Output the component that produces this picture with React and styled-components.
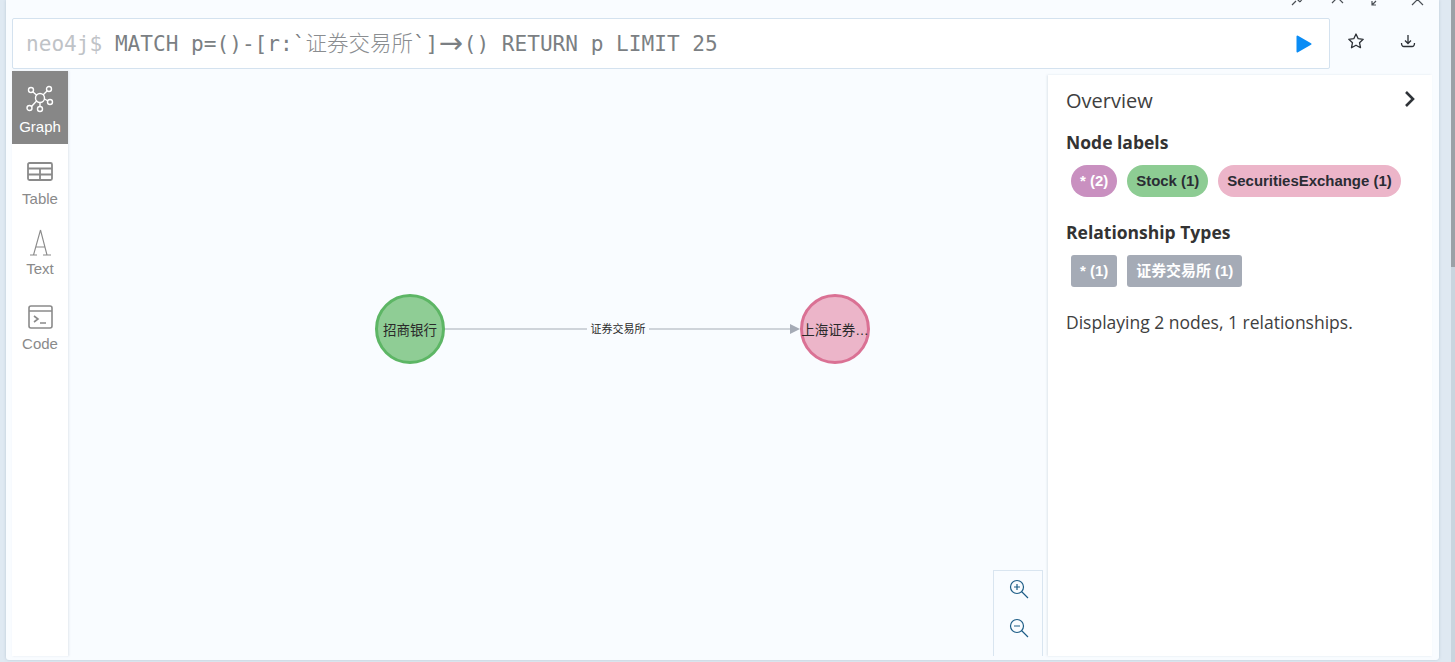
import React from "react";
import styled, { createGlobalStyle } from "styled-components";

const GlobalStyle = createGlobalStyle`
  html, body {
    margin: 0;
    padding: 0;
    height: 100%;
    overflow: hidden;
    background: #dfe9f2;
  }
  #root {
    height: 100%;
  }
`;

const sans = `"Open Sans", "Noto Sans CJK SC", sans-serif`;
const arial = `"Liberation Sans", "Noto Sans CJK SC", sans-serif`;
const mono = `"DejaVu Sans Mono", "Noto Sans CJK SC", monospace`;

/* the page, with the frame card and the browser scrollbar */
const Page = styled.div`
  height: 662px;
  display: flex;
  padding-left: 6px;
  box-sizing: border-box;
`;

const Frame = styled.div`
  width: 1433px;
  height: 660px;
  background: #f9fcff;
  border-radius: 0 0 3px 3px;
  box-shadow: 0 0 3px rgba(120, 140, 160, 0.35);
  display: flex;
  flex-direction: column;
  overflow: hidden;
`;

const Scrollbar = styled.div`
  margin-left: auto;
  width: 4px;
  height: 662px;
  background: #c9d5df;
  position: relative;
`;

const ScrollThumb = styled.div`
  position: absolute;
  top: 0;
  left: 0;
  width: 4px;
  height: 267px;
  background: #9aa1a7;
`;

const TitleIcons = styled.div`
  height: 8px;
  display: flex;
  justify-content: flex-end;
  gap: 23px;
  padding-right: 13px;
  flex: none;
`;

const TitleIcon = styled.svg`
  width: 17px;
  height: 17px;
  margin-top: -9px;
  fill: none;
  stroke: #4a4f55;
  stroke-width: 1.2;
  flex: none;
`;

const EditorRow = styled.div`
  display: flex;
  align-items: center;
  height: 51px;
  margin-top: 10px;
  padding-left: 6px;
  flex: none;
`;

const Editor = styled.div`
  width: 1318px;
  height: 51px;
  background: #fff;
  border: 1px solid #d4e2ef;
  border-radius: 2px;
  display: flex;
  align-items: center;
  padding: 0 17px 0 13px;
  box-sizing: border-box;
  flex: none;
`;

const Prompt = styled.span`
  font: 21.1px/1 ${mono};
  color: #bfc3c7;
  margin-right: 12.7px;
`;

const Query = styled.span`
  font: 21.1px/1 ${mono};
  color: #7b7f83;
  white-space: pre;
  flex: 1;
`;

const CjkRun = styled.span`
  font-size: 21.5px;
  font-weight: 300;
  color: #8a8d90;
`;

/* stands in for the two cell wide ligature of the editor font */
const ArrowGlyph = styled.span`
  display: inline-block;
  width: 25.4px;
  text-align: center;
  font-family: "DejaVu Sans", sans-serif;
  font-size: 29px;
  line-height: 0;
  overflow: visible;
  vertical-align: -2px;
`;

const EditorAction = styled.button`
  width: 52px;
  height: 40px;
  border: 0;
  padding: 0 0 5px;
  background: transparent;
  display: flex;
  align-items: center;
  justify-content: center;
  flex: none;
`;

const ActionIcon = styled.svg`
  width: 18px;
  height: 18px;
  fill: none;
  stroke: #2c3036;
  stroke-width: 1.3;
`;

const Body = styled.div`
  flex: 1;
  display: flex;
  min-height: 0;
  padding: 0 7px 0 6px;
  margin-top: 2px;
`;

/* left column with the view switcher */
const Sidebar = styled.nav`
  width: 56px;
  height: 585px;
  background: #fff;
  box-shadow: 1px 0 2px rgba(120, 140, 160, 0.18);
  flex: none;
`;

const Tab = styled.div`
  height: ${(p) => p.$height}px;
  display: flex;
  flex-direction: column;
  align-items: center;
  gap: ${(p) => p.$gap}px;
  box-sizing: border-box;
  padding-top: ${(p) => p.$pad}px;
  background: ${(p) => (p.$active ? "#878787" : "transparent")};
  color: ${(p) => (p.$active ? "#fff" : "#8a8a8a")};
  font: 15px/18px ${arial};
`;

const TabIcon = styled.svg`
  width: 28px;
  height: 28px;
  fill: none;
  stroke: currentColor;
  stroke-width: ${(p) => p.$stroke || 1.4};
`;

const Canvas = styled.div`
  position: relative;
  flex: 1;
  min-width: 0;
`;

const Node = styled.div`
  position: absolute;
  left: ${(p) => p.$x}px;
  top: 223px;
  width: 70px;
  height: 70px;
  box-sizing: border-box;
  border-radius: 50%;
  border: 3px solid ${(p) => p.$border};
  background: ${(p) => p.$fill};
  display: flex;
  align-items: center;
  justify-content: center;
  font: 13.5px/1 ${arial};
  color: #2a2a2a;
  white-space: nowrap;
  padding-top: 3px;
`;

const Edge = styled.svg`
  position: absolute;
  left: 370px;
  top: 243px;
  width: 366px;
  height: 30px;
`;

const EdgeLabel = styled.div`
  position: absolute;
  left: 519px;
  top: 251px;
  width: 62px;
  text-align: center;
  font: 11px/14px ${arial};
  color: #2a2a2a;
  background: #f9fcff;
`;

const ZoomBox = styled.div`
  position: absolute;
  left: 925px;
  top: 499px;
  width: 50px;
  height: 86px;
  box-sizing: border-box;
  border: 1px solid #d9e5f0;
  border-bottom: 0;
  background: #f9fcff;
  display: flex;
  flex-direction: column;
  align-items: center;
  padding: 8px 0 0 2px;
  gap: 19px;
`;

const ZoomIcon = styled.svg`
  width: 20px;
  height: 20px;
  fill: none;
  stroke: #1c5c86;
  stroke-width: 1.2;
`;

/* overview panel on the right */
const Panel = styled.aside`
  flex: none;
  width: 384px;
  margin-top: 4px;
  height: 581px;
  background: #fff;
  box-shadow: -1px 0 2px rgba(120, 140, 160, 0.2);
  padding: 12px 18px;
  box-sizing: border-box;
  font-family: ${sans};
  color: #333;
`;

const PanelHead = styled.div`
  display: flex;
  justify-content: space-between;
  align-items: center;
  font-size: 20px;
  line-height: 27px;
  color: #404040;
  margin-bottom: 16px;
`;

const Chevron = styled.svg`
  width: 12px;
  height: 18px;
  fill: none;
  stroke: #2f3338;
  stroke-width: 2.6;
  margin: 0 -2px 4px 0;
`;

const SectionTitle = styled.h4`
  margin: 0;
  font-size: 17.5px;
  line-height: 24px;
  font-weight: 700;
  color: #333;
`;

const PillRow = styled.div`
  display: flex;
  gap: 10px;
  margin: 11px 0 23px 5px;
`;

const Pill = styled.span`
  height: 32px;
  padding: 0 9px;
  box-sizing: border-box;
  background: ${(p) => p.$bg};
  color: ${(p) => p.$color};
  border-radius: ${(p) => (p.$square ? "3px" : "16px")};
  font: 700 14.95px/32px ${arial};
  white-space: nowrap;
`;

const Summary = styled.p`
  margin: 1px 0 0;
  font-size: 17.5px;
  line-height: 24px;
  color: #404040;
`;

export default function App() {
  return (
    <>
      <GlobalStyle />
      <Page>
        <Frame>
          <TitleIcons>
            <TitleIcon viewBox="0 0 17 17"><path d="M3 14l4-4M6 6l5 5M6 6l4-3 4 4-3 4" /></TitleIcon>
            <TitleIcon viewBox="0 0 17 17"><path d="M3 12l5.500-5.500L14 12" /></TitleIcon>
            <TitleIcon viewBox="0 0 17 17"><path d="M3 14l4-4M3 10v4h4M14 3l-4 4M14 7V3h-4" /></TitleIcon>
            <TitleIcon viewBox="0 0 17 17"><path d="M3 3l11 11M14 3L3 14" /></TitleIcon>
          </TitleIcons>
          <EditorRow>
            <Editor>
              <Prompt>neo4j$</Prompt>
              <Query>MATCH p=()-[r:`<CjkRun>证券交易所</CjkRun>`]<ArrowGlyph>→</ArrowGlyph>() RETURN p LIMIT 25</Query>
              <svg width="16" height="18" viewBox="0 0 16 18">
                <path d="M1.500 1.500L14.500 9 1.500 16.500z" fill="#0a8cf5" stroke="#0a8cf5" strokeWidth="2" strokeLinejoin="round" />
              </svg>
            </Editor>
            <EditorAction>
              <ActionIcon viewBox="0 0 18 18">
                <path d="M9 2l2.200 4.700 5 .6-3.700 3.400 1 5L9 13.200l-4.500 2.500 1-5L1.800 7.300l5-.6z" strokeLinejoin="round" />
              </ActionIcon>
            </EditorAction>
            <EditorAction>
              <ActionIcon viewBox="0 0 18 18">
                <path d="M9 3v8M6 8.500L9 11.500l3-3M2.500 11c0 2.500 1 3.500 2.500 3.500h8c1.500 0 2.500-1 2.500-3.500" />
              </ActionIcon>
            </EditorAction>
          </EditorRow>
          <Body>
            <Sidebar>
              <Tab $active $height={73} $pad={14} $gap={5}>
                <TabIcon viewBox="0 0 28 28">
                  <circle cx="14" cy="13" r="4.500" />
                  <circle cx="5" cy="5" r="2.500" />
                  <circle cx="23" cy="4" r="2.500" />
                  <circle cx="3.500" cy="23" r="2.500" />
                  <circle cx="14" cy="24" r="2.500" />
                  <circle cx="24" cy="17" r="2.500" />
                  <path d="M7 7l4 3.500M21 6l-4 4M5.500 21.500l5.500-6M14 17.500V21.500M18.500 14l3.500 2" />
                </TabIcon>
                Graph
              </Tab>
              <Tab $height={71} $pad={13} $gap={5}>
                <TabIcon viewBox="0 0 28 28" $stroke={1.8}>
                  <rect x="2" y="6" width="24" height="17" rx="1.500" />
                  <path d="M2 11.500h24M2 17.500h24M14 11.500V23" />
                </TabIcon>
                Table
              </Tab>
              <Tab $height={70} $pad={14} $gap={3}>
                <TabIcon viewBox="0 0 28 28">
                  <path d="M4 26h7M17 26h8M14.500 1L7.500 26M14.500 1l6.500 25M9.500 18h9.500" strokeWidth="1.100" />
                </TabIcon>
                Text
              </Tab>
              <Tab $height={75} $pad={17} $gap={5}>
                <TabIcon viewBox="0 0 28 28" $stroke={1.6}>
                  <rect x="3" y="4" width="23" height="22" rx="2" />
                  <path d="M3 9h23M8 14l4 3-4 3M14 21h6" />
                </TabIcon>
                Code
              </Tab>
            </Sidebar>
            <Canvas>
              <Edge viewBox="0 0 366 30">
                <path d="M0 15H355" stroke="#a5abb6" strokeWidth="1.200" />
                <path d="M352 10l10 5-10 5z" fill="#a5abb6" />
              </Edge>
              <EdgeLabel>证券交易所</EdgeLabel>
              <Node $x={307} $fill="#8fcd95" $border="#5db665">招商银行</Node>
              <Node $x={732} $fill="#ecb5c9" $border="#da7194">上海证券…</Node>
              <ZoomBox>
                <ZoomIcon viewBox="0 0 20 20">
                  <circle cx="8" cy="8" r="6.500" />
                  <path d="M12.500 12.500L19 19M5 8h6M8 5v6" />
                </ZoomIcon>
                <ZoomIcon viewBox="0 0 20 20">
                  <circle cx="8" cy="8" r="6.500" />
                  <path d="M12.500 12.500L19 19M5 8h6" />
                </ZoomIcon>
              </ZoomBox>
            </Canvas>
            <Panel>
              <PanelHead>
                Overview
                <Chevron viewBox="0 0 12 18"><path d="M2 2l7 7-7 7" /></Chevron>
              </PanelHead>
              <SectionTitle>Node labels</SectionTitle>
              <PillRow>
                <Pill $bg="#c990c0" $color="#fff">* (2)</Pill>
                <Pill $bg="#8dcc93" $color="#2a2c34">Stock (1)</Pill>
                <Pill $bg="#ecb5c9" $color="#2a2c34">SecuritiesExchange (1)</Pill>
              </PillRow>
              <SectionTitle>Relationship Types</SectionTitle>
              <PillRow>
                <Pill $square $bg="#a5abb6" $color="#fff">* (1)</Pill>
                <Pill $square $bg="#a5abb6" $color="#fff">证券交易所 (1)</Pill>
              </PillRow>
              <Summary>Displaying 2 nodes, 1 relationships.</Summary>
            </Panel>
          </Body>
        </Frame>
        <Scrollbar><ScrollThumb /></Scrollbar>
      </Page>
    </>
  );
}
